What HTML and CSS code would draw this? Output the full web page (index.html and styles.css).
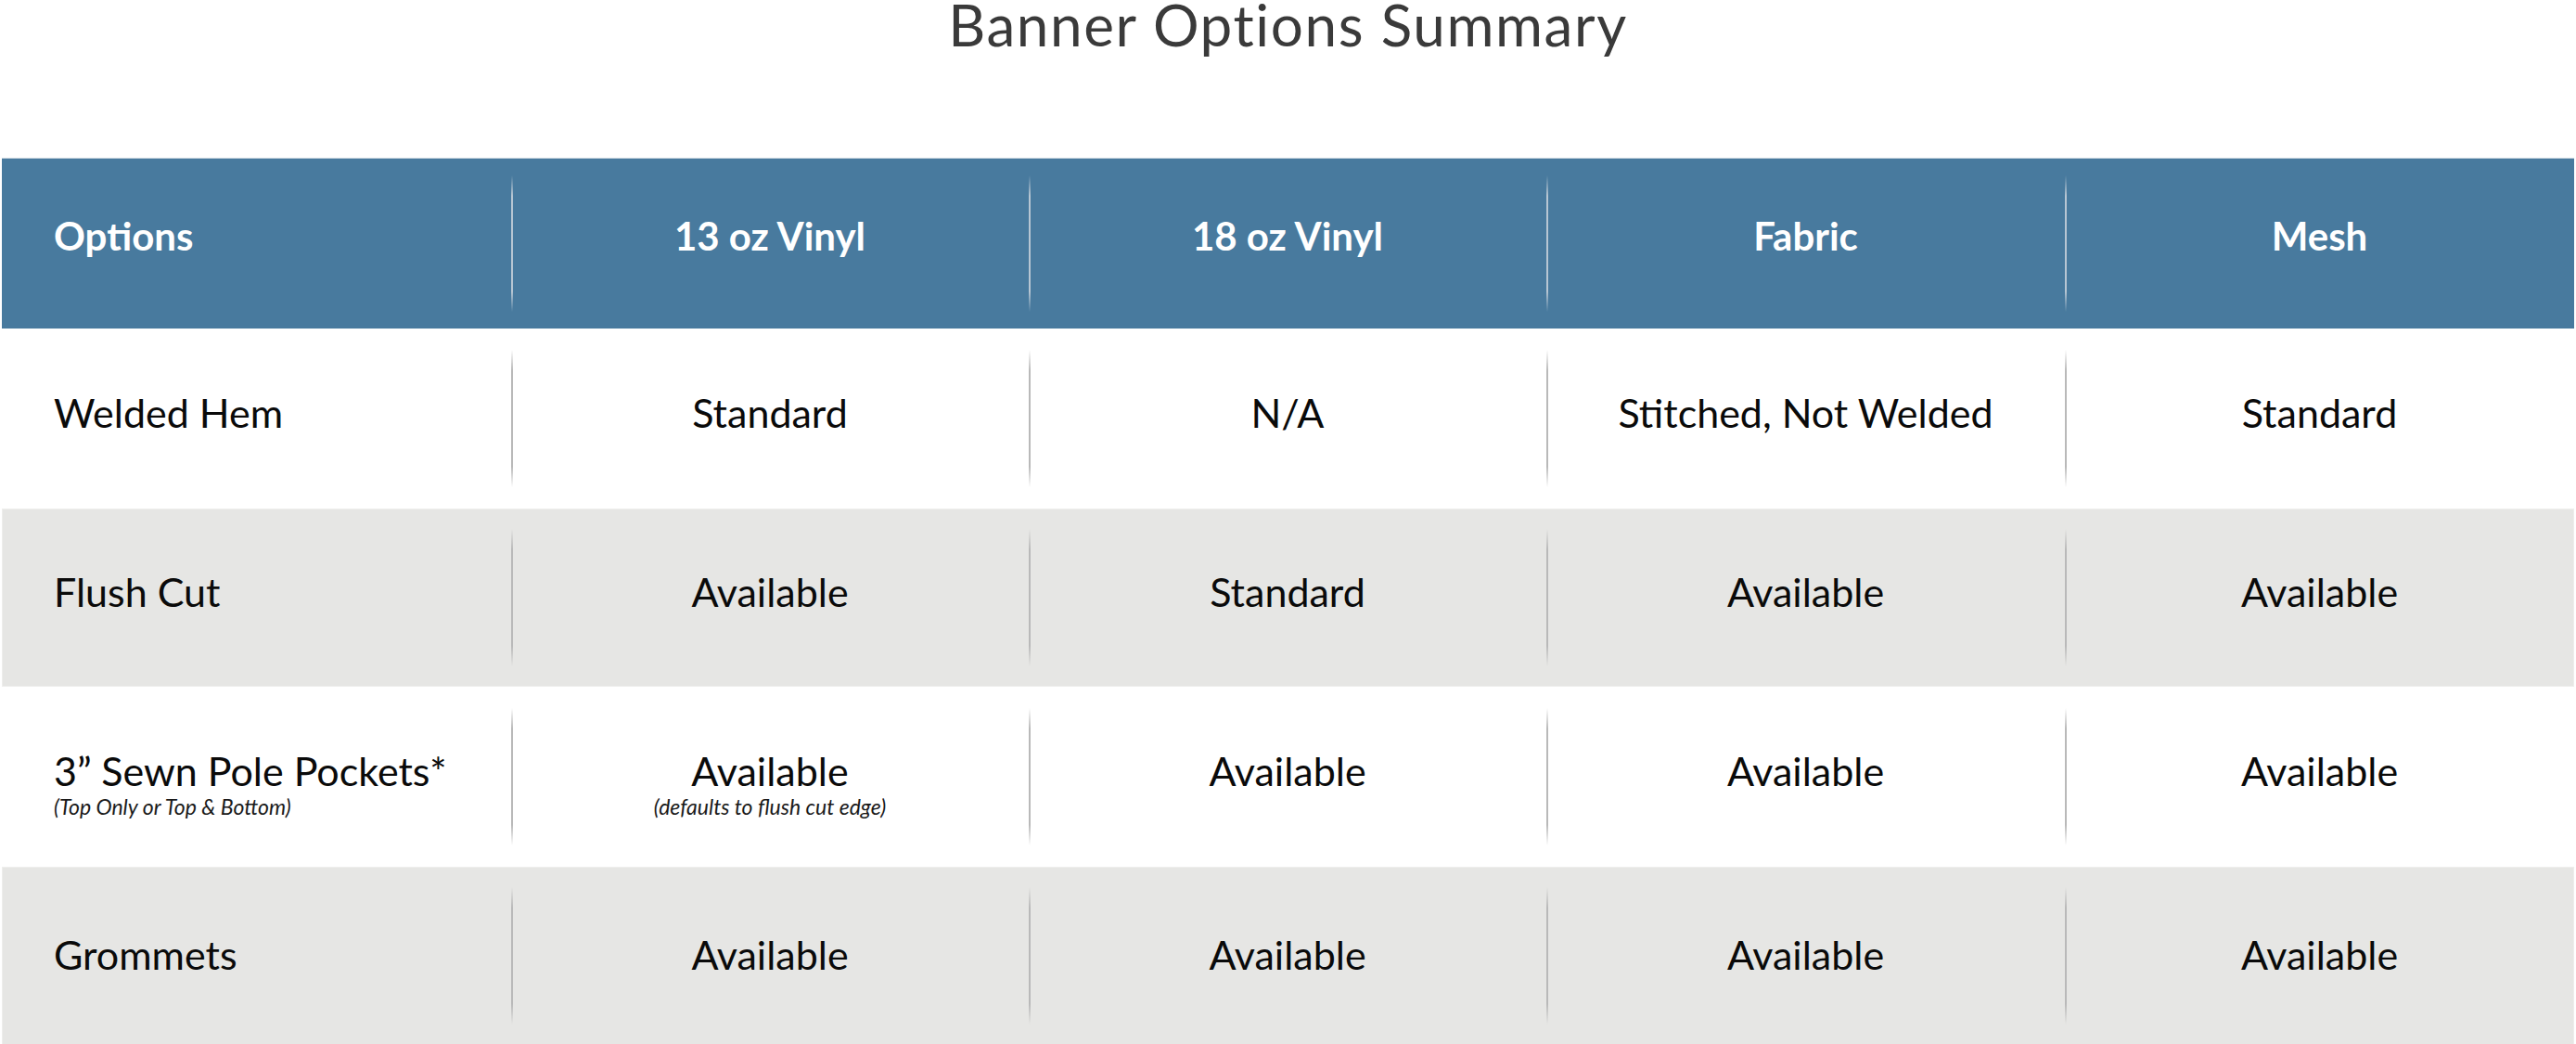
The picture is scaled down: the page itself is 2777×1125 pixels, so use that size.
FILE: index.html
```html
<!DOCTYPE html>
<html lang="en">
<head>
<meta charset="utf-8">
<title>Banner Options Summary</title>
<link rel="stylesheet" href="styles.css">
</head>
<body>
<h1 class="title">Banner Options Summary</h1>
<div class="table">
  <div class="row head">
    <div class="cell first">Options</div>
    <div class="cell">13 oz Vinyl</div>
    <div class="cell">18 oz Vinyl</div>
    <div class="cell">Fabric</div>
    <div class="cell">Mesh</div>
  </div>
  <div class="row">
    <div class="cell first">Welded Hem</div>
    <div class="cell">Standard</div>
    <div class="cell">N/A</div>
    <div class="cell">Stitched, Not Welded</div>
    <div class="cell">Standard</div>
  </div>
  <div class="row alt">
    <div class="cell first">Flush Cut</div>
    <div class="cell">Available</div>
    <div class="cell">Standard</div>
    <div class="cell">Available</div>
    <div class="cell">Available</div>
  </div>
  <div class="row">
    <div class="cell first"><div class="stack"><span>3” Sewn Pole Pockets*</span><span class="note">(Top Only or Top &amp; Bottom)</span></div></div>
    <div class="cell"><div class="stack center"><span>Available</span><span class="note">(defaults to flush cut edge)</span></div></div>
    <div class="cell">Available</div>
    <div class="cell">Available</div>
    <div class="cell">Available</div>
  </div>
  <div class="row alt last">
    <div class="cell first">Grommets</div>
    <div class="cell">Available</div>
    <div class="cell">Available</div>
    <div class="cell">Available</div>
    <div class="cell">Available</div>
  </div>
</div>
</body>
</html>
```
FILE: styles.css
```css
html, body {
  margin: 0;
  padding: 0;
  background: #ffffff;
}

body {
  font-family: "Lato", "Liberation Sans", sans-serif;
  color: #0a0a0a;
}

.title {
  margin: 0;
  height: 170px;
  font-size: 62px;
  line-height: 52px;
  font-weight: 400;
  letter-spacing: 1.6px;
  text-align: center;
  color: #3a3a3a;
}

.table {
  margin: 0 2px;
  display: flex;
  flex-direction: column;
  gap: 1px;
}

.row {
  display: grid;
  grid-template-columns: 549px 558px 558px 559px 1fr;
  height: 192px;
  background: #ffffff;
}

.row.head {
  height: 183px;
  background: #487a9e;
  border-top: 1px solid #c3d1dc;
  color: #ffffff;
  font-weight: 700;
}

.row.alt {
  background: #e6e6e4;
  box-shadow: inset 0 0 0 1px #eeeeec;
}

.cell {
  display: flex;
  align-items: center;
  justify-content: center;
  padding-bottom: 14px;
  font-size: 43px;
  background-image: linear-gradient(to bottom, rgba(170,170,170,0), #b9b9b9 15%, #b9b9b9 85%, rgba(170,170,170,0));
  background-repeat: no-repeat;
  background-position: left center;
  background-size: 2px calc(100% - 44px);
}

.row.last .cell {
  padding-bottom: 4px;
}

.row.head .cell {
  font-size: 42px;
  padding-bottom: 18px;
  background-image: linear-gradient(to bottom, rgba(200,210,220,0), #b7c6d3 15%, #b7c6d3 85%, rgba(200,210,220,0));
  background-size: 2px calc(100% - 36px);
}

.cell.first {
  justify-content: flex-start;
  padding-left: 56px;
  background-image: none;
}

.row.head .cell.first {
  background-image: none;
}

.stack {
  display: flex;
  flex-direction: column;
  margin-bottom: -26px;
}

.stack.center {
  align-items: center;
}

.note {
  font-size: 23px;
  font-style: italic;
  line-height: 26px;
  color: #1a1a1a;
}
```
